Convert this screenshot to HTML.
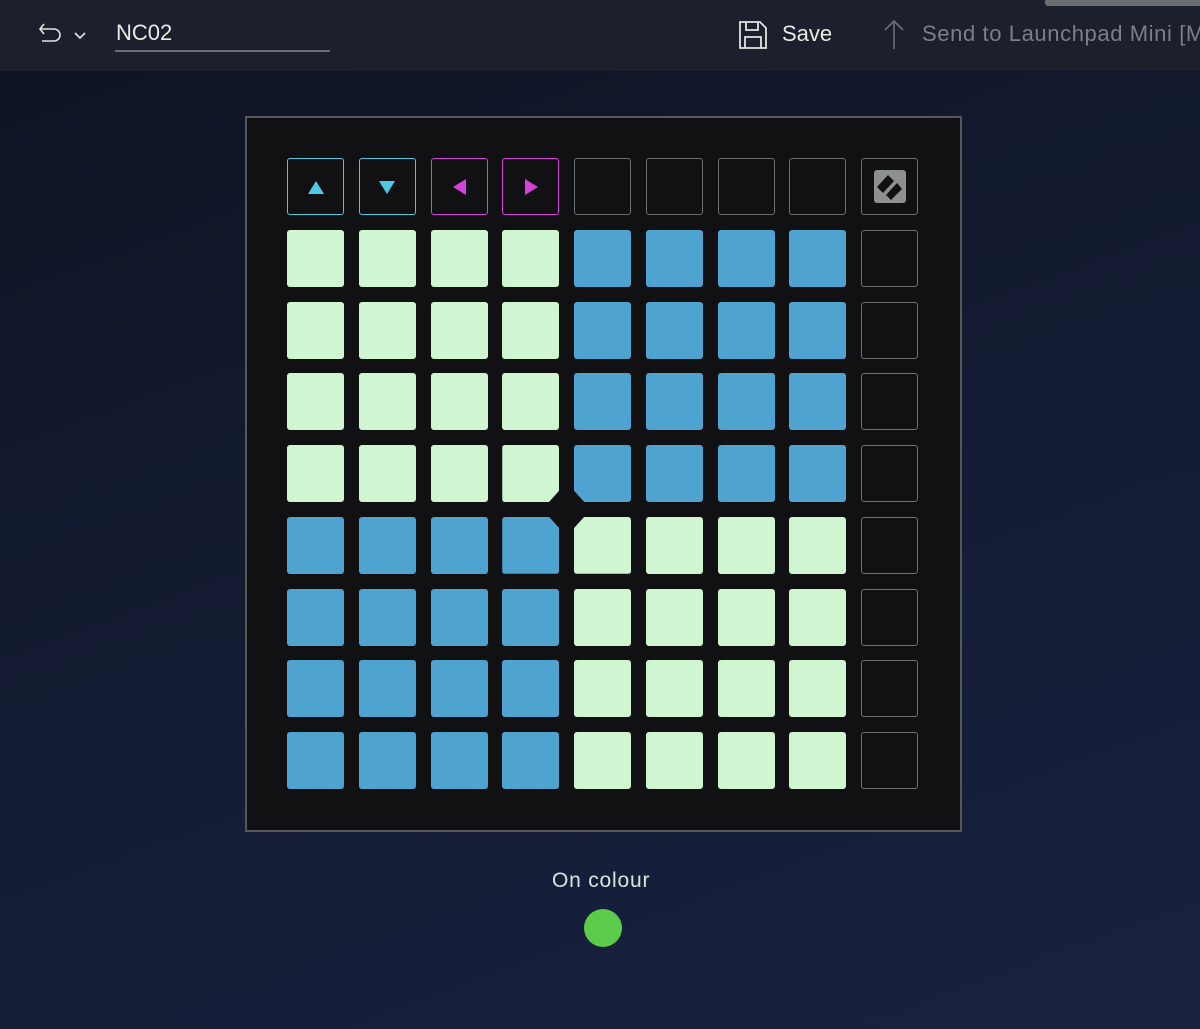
<!DOCTYPE html>
<html><head><meta charset="utf-8"><style>
*{margin:0;padding:0;box-sizing:border-box}
body{width:1200px;height:1029px;overflow:hidden;font-family:"Liberation Sans",sans-serif;background:linear-gradient(160deg,#0e1322 0%,#141c33 50%,#18223f 100%);position:relative}
.hdr{position:absolute;left:0;top:0;width:1200px;height:71px;background:#1c1f2c}
.topbar{position:absolute;left:1045px;top:0;width:155px;height:6px;background:#6a6d72;border-radius:0 0 0 3px}
.t{position:absolute;color:#e6ece6;font-size:22px}
.frame{position:absolute;left:245px;top:116px;width:717px;height:716px;background:#111113;border:2px solid #55585b}
.grid{position:absolute;left:287px;top:158px;display:grid;grid-template-columns:repeat(9,57px);grid-template-rows:repeat(9,57px);gap:14.75px}
.p{border-radius:3px}
.g{background:#cff5d1}.b{background:#4fa3d1}
.o{border:1.5px solid #6c6e70;border-radius:3px}
.c{border:1.5px solid #49c8e0;border-radius:3px;position:relative}
.m{border:1.5px solid #d641d9;border-radius:3px;position:relative}
.tri{position:absolute;left:50%;top:50%;width:0;height:0}
</style></head><body>
<div class="hdr"></div><div class="topbar"></div>
<svg style="position:absolute;left:38px;top:22px" width="52" height="26" viewBox="0 0 52 26"><path d="M6 2 L2 7 L6 12 M2 7 H16 a6 6 0 0 1 0 12 H4" fill="none" stroke="#dfe6e0" stroke-width="1.6"/><path d="M37 11 l5 5 l5 -5" fill="none" stroke="#dfe6e0" stroke-width="1.6"/></svg>
<div class="t" style="left:116px;top:20px">NC02</div>
<div style="position:absolute;left:115px;top:50px;width:215px;height:2px;background:#6b6e75"></div>
<svg style="position:absolute;left:738px;top:20px" width="30" height="30" viewBox="0 0 30 30"><path d="M2 2 H22 L28 8 V28 H2 Z M8 2 V10 H20 V2 M7 28 V17 H23 V28" fill="none" stroke="#dfe6e0" stroke-width="1.8"/></svg>
<div class="t" style="left:782px;top:21px">Save</div>
<svg style="position:absolute;left:882px;top:19px" width="24" height="32" viewBox="0 0 24 32"><path d="M12 30 V2 M3 11 L12 2 L21 11" fill="none" stroke="#6d7078" stroke-width="1.6"/></svg>
<div class="t" style="left:922px;top:21px;color:#7c7f87;white-space:nowrap;letter-spacing:0.6px">Send to Launchpad Mini [M</div>
<div class="frame"></div>
<div class="grid">
<div class="c"><div class="tri" style="margin:-6px 0 0 -8px;border-left:8px solid transparent;border-right:8px solid transparent;border-bottom:13px solid #4ec9e2"></div></div>
<div class="c"><div class="tri" style="margin:-6px 0 0 -8px;border-left:8px solid transparent;border-right:8px solid transparent;border-top:13px solid #4ec9e2"></div></div>
<div class="m"><div class="tri" style="margin:-8px 0 0 -6px;border-top:8px solid transparent;border-bottom:8px solid transparent;border-right:13px solid #d641d9"></div></div>
<div class="m"><div class="tri" style="margin:-8px 0 0 -6px;border-top:8px solid transparent;border-bottom:8px solid transparent;border-left:13px solid #d641d9"></div></div>
<div class="o"></div><div class="o"></div><div class="o"></div><div class="o"></div>
<div class="o" style="position:relative"><svg style="position:absolute;left:12px;top:11px" width="32" height="33" viewBox="0 0 32 33"><rect width="32" height="33" rx="3" fill="#8d8f90"/><path d="M3 17 L14 5 L20 11 L9 23 Z M12 25 L23 13 L28 19 L17 30 Z" fill="#111"/></svg></div>
<div class="p g"></div><div class="p g"></div><div class="p g"></div><div class="p g"></div><div class="p b"></div><div class="p b"></div><div class="p b"></div><div class="p b"></div><div class="o"></div>
<div class="p g"></div><div class="p g"></div><div class="p g"></div><div class="p g"></div><div class="p b"></div><div class="p b"></div><div class="p b"></div><div class="p b"></div><div class="o"></div>
<div class="p g"></div><div class="p g"></div><div class="p g"></div><div class="p g"></div><div class="p b"></div><div class="p b"></div><div class="p b"></div><div class="p b"></div><div class="o"></div>
<div class="p g"></div><div class="p g"></div><div class="p g"></div><div class="p g" style="clip-path:polygon(0 0,100% 0,100% 80%,82% 100%,0 100%)"></div><div class="p b" style="clip-path:polygon(0 0,100% 0,100% 100%,18% 100%,0 80%)"></div><div class="p b"></div><div class="p b"></div><div class="p b"></div><div class="o"></div>
<div class="p b"></div><div class="p b"></div><div class="p b"></div><div class="p b" style="clip-path:polygon(0 0,82% 0,100% 20%,100% 100%,0 100%)"></div><div class="p g" style="clip-path:polygon(18% 0,100% 0,100% 100%,0 100%,0 20%)"></div><div class="p g"></div><div class="p g"></div><div class="p g"></div><div class="o"></div>
<div class="p b"></div><div class="p b"></div><div class="p b"></div><div class="p b"></div><div class="p g"></div><div class="p g"></div><div class="p g"></div><div class="p g"></div><div class="o"></div>
<div class="p b"></div><div class="p b"></div><div class="p b"></div><div class="p b"></div><div class="p g"></div><div class="p g"></div><div class="p g"></div><div class="p g"></div><div class="o"></div>
<div class="p b"></div><div class="p b"></div><div class="p b"></div><div class="p b"></div><div class="p g"></div><div class="p g"></div><div class="p g"></div><div class="p g"></div><div class="o"></div>
</div>
<div class="t" style="left:552px;top:869px;font-size:21px;color:#d6e6dc;letter-spacing:0.8px">On colour</div>
<div style="position:absolute;left:584px;top:909px;width:38px;height:38px;border-radius:50%;background:#5ccb4b"></div>
</body></html>
